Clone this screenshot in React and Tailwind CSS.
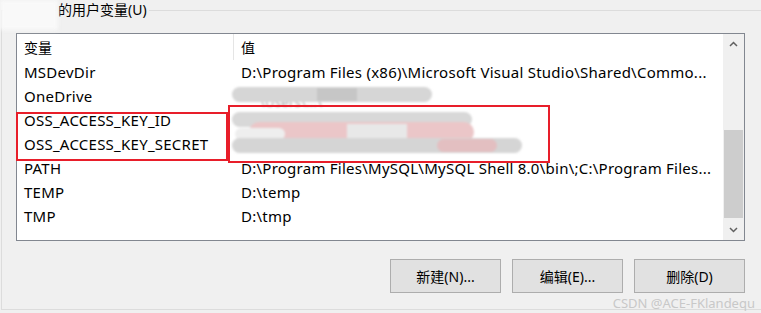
import React from "react";

const rows = [
  { name: "MSDevDir", value: "D:\\Program Files (x86)\\Microsoft Visual Studio\\Shared\\Commo..." },
  { name: "OneDrive", value: "" },
  { name: "OSS_ACCESS_KEY_ID", value: "" },
  { name: "OSS_ACCESS_KEY_SECRET", value: "" },
  { name: "PATH", value: "D:\\Program Files\\MySQL\\MySQL Shell 8.0\\bin\\;C:\\Program Files..." },
  { name: "TEMP", value: "D:\\temp" },
  { name: "TMP", value: "D:\\tmp" },
];

const font = { fontFamily: '"Noto Sans", "Noto Sans CJK SC", sans-serif' };

const Button = ({ children }) => (
  <button className="w-[111px] h-[34px] bg-[#e1e1e1] border border-[#adadad] text-[14px] text-black">
    {children}
  </button>
);

// mosaic / smudge covering the secret values
const Smudge = () => (
  <svg className="absolute left-[213px] top-[48px]" width="300" height="80" viewBox="0 0 300 80">
    <defs>
      <filter id="b" x="-10%" y="-50%" width="120%" height="200%">
        <feGaussianBlur stdDeviation="1.2" />
      </filter>
    </defs>
    <g filter="url(#b)">
      <text x="30" y="25" fontSize="13" fill="#a8a8a8">\Users\...\</text>
      <rect x="2" y="5" width="200" height="15" rx="7.5" fill="#d6d6d6" />
      <rect x="87" y="6" width="40" height="13" fill="#c6c6c6" />
      <rect x="2" y="30" width="240" height="15" rx="7.5" fill="#d8d8d8" />
      <rect x="19" y="40" width="225" height="20" rx="10" fill="#ebc6c8" />
      <rect x="5" y="46" width="50" height="12" rx="6" fill="#eeeeee" />
      <rect x="117" y="42" width="60" height="14" fill="#e8e8e8" />
      <rect x="2" y="56" width="290" height="15" rx="7.5" fill="#d5d5d5" />
      <rect x="207" y="57" width="60" height="13" rx="6.5" fill="#e3bfc1" />
    </g>
  </svg>
);

const App = () => {
  return (
    <div className="relative w-[761px] h-[313px] bg-[#f0f0f0] overflow-hidden" style={font}>
      {/* group box */}
      <div className="relative ml-[1px] mt-[10px] w-[800px] h-[300px] border border-[#dcdcdc] pl-[14px] pt-[22px] flex flex-col">
        <span className="absolute left-[54px] top-[-11px] px-[2px] bg-[#f0f0f0] text-[14px] leading-[20px] text-black">
          的用户变量(U)
        </span>

        {/* list box */}
        <div className="relative w-[729px] h-[208px] border border-[#828790] bg-white flex">
          <div className="relative flex-1 text-[15px] tracking-[0.25px] text-black">
            <div className="flex h-[26px] items-center text-[14px] tracking-normal">
              <div className="w-[217px] pl-[7px] border-r border-[#e5e5e5] h-full flex items-center">变量</div>
              <div className="pl-[7px]">值</div>
            </div>
            {rows.map((r) => (
              <div key={r.name} className="flex h-[24px] items-center whitespace-nowrap">
                <div className="w-[217px] pl-[7px]">{r.name}</div>
                <div className="pl-[7px]">{r.value}</div>
              </div>
            ))}
            <Smudge />
          </div>

          {/* scrollbar */}
          <div className="w-[21px] h-full bg-[#f0f0f0] flex flex-col items-center">
            <div className="h-[20px] flex items-center justify-center">
              <svg width="9" height="6" viewBox="0 0 9 6">
                <path d="M1 5 L4.5 1.5 L8 5" fill="none" stroke="#606060" strokeWidth="1.5" />
              </svg>
            </div>
            <div className="w-[19px] h-[88px] mt-[76px] bg-[#cdcdcd]" />
            <div className="flex-1" />
            <div className="h-[20px] flex items-center justify-center">
              <svg width="9" height="6" viewBox="0 0 9 6">
                <path d="M1 1 L4.5 4.5 L8 1" fill="none" stroke="#606060" strokeWidth="1.5" />
              </svg>
            </div>
          </div>

          {/* red highlight boxes */}
          <div className="absolute left-[-1px] top-[78px] w-[212px] h-[49px] border-2 border-[#e81e2a]" />
          <div className="absolute left-[211px] top-[71px] w-[322px] h-[58px] border-2 border-[#e81e2a]" />
        </div>

        {/* buttons */}
        <div className="flex gap-[11px] ml-[374px] mt-[18px]">
          <Button>新建(N)...</Button>
          <Button>编辑(E)...</Button>
          <Button>删除(D)</Button>
        </div>
      </div>

      {/* blurred corner */}
      <div className="absolute left-0 top-0 w-[58px] h-[30px] bg-[#f9f9f9] blur-[2px]" />

      {/* watermark */}
      <div className="absolute right-[6px] bottom-[3px] text-[13px] leading-[14px] text-[#c8c8c8]">
        CSDN @ACE-FKlandequ
      </div>
    </div>
  );
};

export default App;
